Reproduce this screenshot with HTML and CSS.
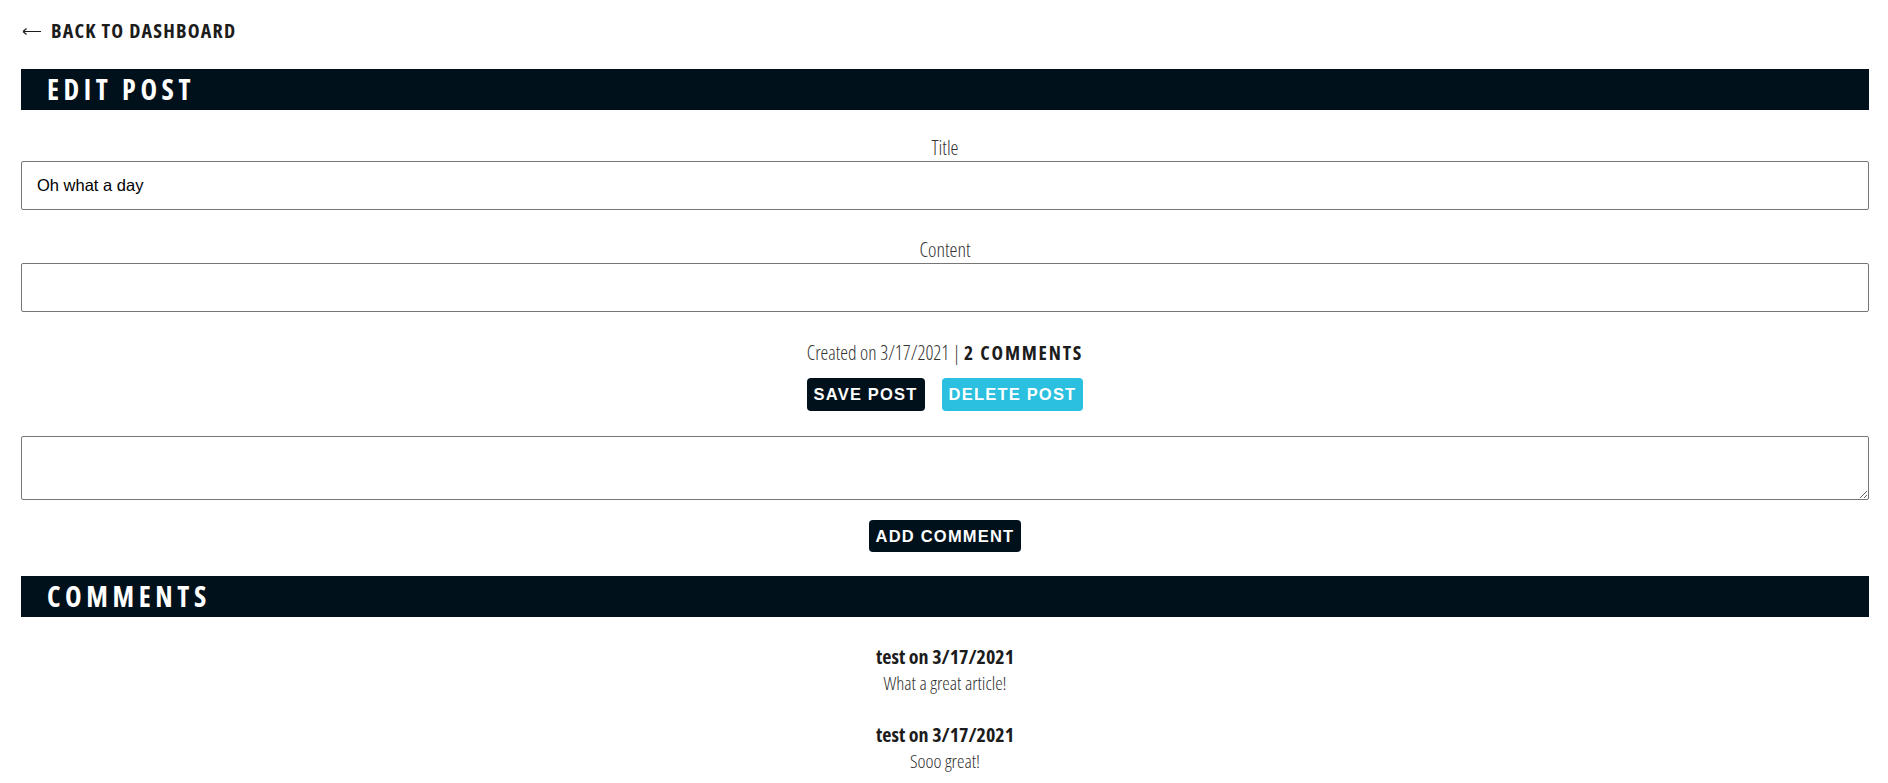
FILE: index.html
```html
<!DOCTYPE html>
<html lang="en">
<head>
<meta charset="utf-8">
<title>Edit Post</title>
<link rel="stylesheet" href="styles.css">
</head>
<body>
<main class="page">
  <a class="back-link" href="#"><svg class="arrow" width="19" height="10" viewBox="0 0 19 10" aria-hidden="true"><path d="M1 5.5H19M1 5.5L4.5 2.5M1 5.5L4.5 8.5" fill="none" stroke="#1c1c1c" stroke-width="1.2"/></svg><span>BACK TO DASHBOARD</span></a>

  <h2 class="bar-title">EDIT POST</h2>

  <form class="post-form">
    <label class="field-label" for="title">Title</label>
    <input class="field-input" id="title" type="text" value="Oh what a day">

    <label class="field-label second" for="content">Content</label>
    <input class="field-input" id="content" type="text" value="">

    <p class="meta">Created on 3/17/2021 | <strong class="meta-count">2 COMMENTS</strong></p>

    <div class="btn-row">
      <button type="button" class="btn btn-dark">SAVE POST</button>
      <button type="button" class="btn btn-blue">DELETE POST</button>
    </div>
  </form>

  <form class="comment-form">
    <textarea class="comment-input"></textarea>
    <div class="btn-row add-row">
      <button type="button" class="btn btn-dark">ADD COMMENT</button>
    </div>
  </form>

  <h2 class="bar-title">COMMENTS</h2>

  <section class="comments">
    <div class="comment">
      <p class="comment-author">test on 3/17/2021</p>
      <p class="comment-text">What a great article!</p>
    </div>
    <div class="comment">
      <p class="comment-author">test on 3/17/2021</p>
      <p class="comment-text">Sooo great!</p>
    </div>
  </section>
</main>
</body>
</html>
```

FILE: styles.css
```css
* { box-sizing: border-box; }

html, body {
  margin: 0;
  padding: 0;
  background: #ffffff;
}

body {
  font-family: "Open Sans", "Liberation Sans", sans-serif;
  font-stretch: 75%;
  color: #1c1c1c;
}

.page {
  padding: 17px 19px 0 21px;
  display: flex;
  flex-direction: column;
}

.back-link {
  display: flex;
  align-items: center;
  gap: 10px;
  align-self: flex-start;
  font-size: 20px;
  font-weight: 700;
  letter-spacing: 1.2px;
  line-height: 28px;
  color: #1c1c1c;
  text-decoration: none;
}

.arrow {
  display: block;
  margin-left: 1px;
}

.bar-title {
  margin: 24px 0 0;
  height: 41px;
  line-height: 41px;
  background: #01111c;
  color: #ffffff;
  font-size: 28px;
  font-weight: 700;
  letter-spacing: 4.6px;
  padding-left: 26px;
}

.post-form {
  display: flex;
  flex-direction: column;
  margin-top: 25px;
}

.field-label {
  text-align: center;
  font-size: 20px;
  font-weight: 300;
  line-height: 26px;
  color: #333333;
}

.field-label.second {
  margin-top: 27px;
}

.field-input {
  height: 49px;
  width: 100%;
  border: 1px solid #767676;
  border-radius: 2px;
  padding: 0 15px;
  font-family: "Liberation Sans", Arial, sans-serif;
  font-stretch: normal;
  font-size: 16.5px;
  color: #000000;
  margin: 0;
}

.meta {
  margin: 28px 0 0;
  text-align: center;
  font-size: 19.5px;
  font-weight: 300;
  line-height: 26px;
  color: #333333;
}

.meta-count {
  font-weight: 700;
  letter-spacing: 1.8px;
  color: #1c1c1c;
}

.btn-row {
  display: flex;
  justify-content: center;
  gap: 17px;
  margin-top: 12px;
}

.btn {
  height: 33px;
  padding: 0 7px;
  border: none;
  border-radius: 4px;
  font-family: "Liberation Sans", Arial, sans-serif;
  font-stretch: normal;
  font-size: 16.5px;
  font-weight: 700;
  letter-spacing: 1.2px;
  color: #ffffff;
  cursor: pointer;
}

.btn-dark { background: #01111c; }
.btn-blue { background: #2bbfe0; }

.comment-form {
  margin-top: 25px;
  display: flex;
  flex-direction: column;
}

.comment-input {
  height: 64px;
  width: 100%;
  border: 1px solid #767676;
  border-radius: 2px;
  margin: 0;
  resize: vertical;
  font-family: "Liberation Sans", Arial, sans-serif;
}

.add-row {
  margin-top: 20px;
}

.add-row .btn {
  height: 32px;
}

.comments {
  padding-top: 27px;
  display: flex;
  flex-direction: column;
  gap: 26px;
}

.comment p {
  margin: 0;
  text-align: center;
}

.comment-author {
  font-size: 20px;
  font-weight: 700;
  line-height: 26px;
  color: #1c1c1c;
}

.comment-text {
  font-size: 19px;
  font-weight: 300;
  line-height: 26px;
  color: #333333;
}
```
